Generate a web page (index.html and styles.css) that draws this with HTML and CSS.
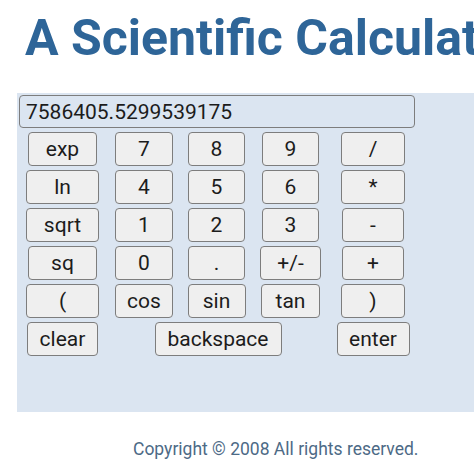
FILE: index.html
```html
<!DOCTYPE html>
<html>
<head>
<meta charset="utf-8">
<link rel="stylesheet" href="styles.css">
</head>
<body>
<h1 class="title">A Scientific Calculator</h1>
<div class="panel">
  <input class="display" type="text" value="7586405.5299539175">
  <div class="keys">
    <button class="key w69">exp</button>
    <button class="key w58">7</button>
    <button class="key w57">8</button>
    <button class="key w57">9</button>
    <button class="key w64">/</button>

    <button class="key w73">ln</button>
    <button class="key w58">4</button>
    <button class="key w57">5</button>
    <button class="key w57">6</button>
    <button class="key w64">*</button>

    <button class="key w73">sqrt</button>
    <button class="key w58">1</button>
    <button class="key w57">2</button>
    <button class="key w57">3</button>
    <button class="key w62">-</button>

    <button class="key w69">sq</button>
    <button class="key w58">0</button>
    <button class="key w57">.</button>
    <button class="key w61">+/-</button>
    <button class="key w62">+</button>

    <button class="key w73">(</button>
    <button class="key w58">cos</button>
    <button class="key w58">sin</button>
    <button class="key w59">tan</button>
    <button class="key w64">)</button>

    <button class="key w71">clear</button>
    <button class="key w127 span3">backspace</button>
    <button class="key w73">enter</button>
  </div>
</div>
<p class="copy">Copyright © 2008 All rights reserved.</p>
</body>
</html>
```
FILE: styles.css
```css
html, body {
  margin: 0;
  padding: 0;
  background: #ffffff;
  overflow: hidden;
}
body {
  font-family: Roboto, "Liberation Sans", sans-serif;
}
.title {
  margin: 0 0 27px 0;
  padding: 10px 0 0 25px;
  font-size: 50px;
  line-height: 56px;
  font-weight: 700;
  color: #2e6598;
  white-space: nowrap;
  overflow: hidden;
}
.panel {
  margin-left: 17px;
  width: 457px;
  height: 319px;
  box-sizing: border-box;
  padding: 2px 0 0 2px;
  background: #dbe5f1;
}
.display {
  display: block;
  width: 396px;
  height: 33px;
  box-sizing: border-box;
  margin: 0;
  padding: 0 0 0 6px;
  border: 1.5px solid #7d7d7d;
  border-radius: 4px;
  background: #dbe5f1;
  font-family: Roboto, "Liberation Sans", sans-serif;
  font-size: 21px;
  color: #1c1c1c;
  outline: none;
}
.keys {
  display: grid;
  grid-template-columns: 81px 82px 63px 85px 80px;
  grid-auto-rows: 34px;
  row-gap: 4px;
  justify-items: center;
  margin: 4px 0 0 3px;
}
.key {
  height: 34px;
  box-sizing: border-box;
  margin: 0;
  padding: 0;
  border: 1.5px solid #7d7d7d;
  border-radius: 4px;
  background: #efefef;
  font-family: Roboto, "Liberation Sans", sans-serif;
  font-size: 21px;
  color: #1c1c1c;
}
.span3 { grid-column: span 3; }
.w57 { width: 57px; }
.w58 { width: 58px; }
.w59 { width: 59px; }
.w61 { width: 61px; }
.w62 { width: 62px; }
.w64 { width: 64px; }
.w69 { width: 69px; }
.w71 { width: 71px; }
.w73 { width: 73px; }
.w127 { width: 127px; }
.copy {
  margin: 27px 0 0 0;
  padding-left: 133px;
  font-size: 17.5px;
  line-height: 20px;
  color: #4d6a86;
  white-space: nowrap;
}
```
